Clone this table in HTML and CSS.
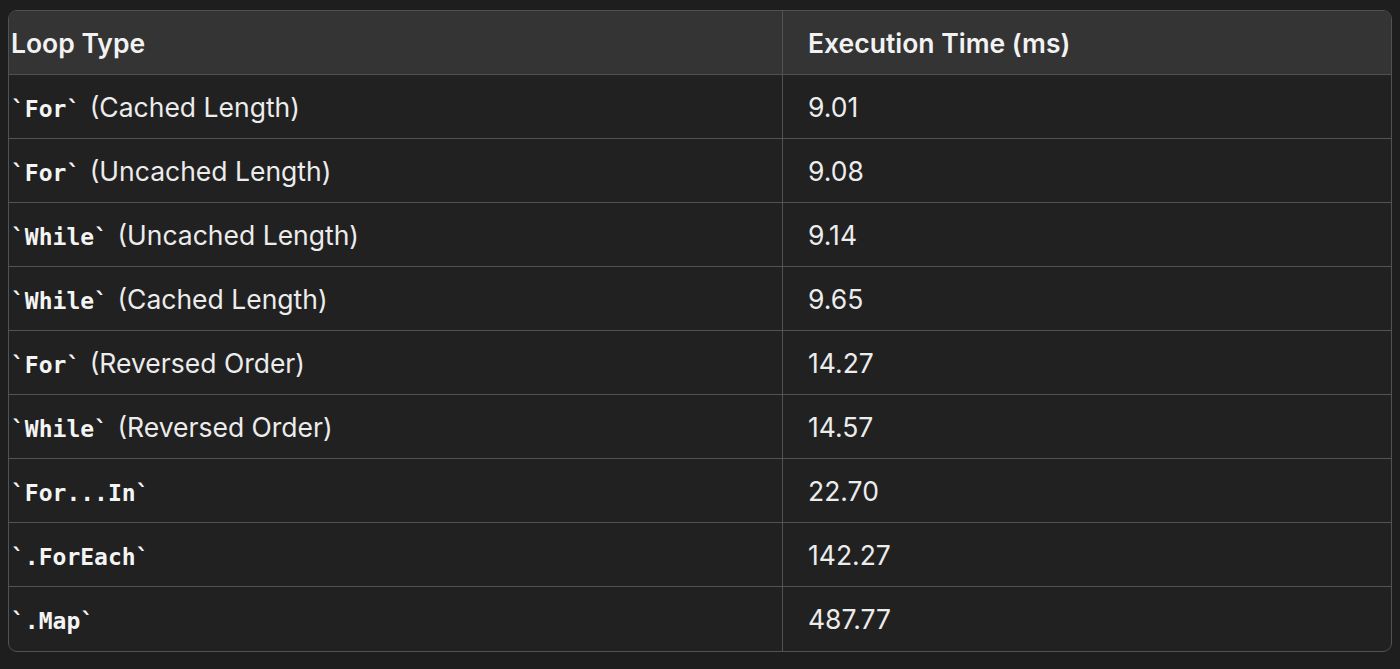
FILE: index.html
```html
<!DOCTYPE html>
<html lang="en">
<head>
<meta charset="utf-8">
<title>Loop benchmark</title>
<link rel="stylesheet" href="styles.css">
</head>
<body>
<div class="wrap">
<table class="bench">
<thead>
<tr><th class="c1">Loop Type</th><th class="c2">Execution Time (ms)</th></tr>
</thead>
<tbody>
<tr><td class="c1"><code>`For`</code> (Cached Length)</td><td class="c2">9.01</td></tr>
<tr><td class="c1"><code>`For`</code> (Uncached Length)</td><td class="c2">9.08</td></tr>
<tr><td class="c1"><code>`While`</code> (Uncached Length)</td><td class="c2">9.14</td></tr>
<tr><td class="c1"><code>`While`</code> (Cached Length)</td><td class="c2">9.65</td></tr>
<tr><td class="c1"><code>`For`</code> (Reversed Order)</td><td class="c2">14.27</td></tr>
<tr><td class="c1"><code>`While`</code> (Reversed Order)</td><td class="c2">14.57</td></tr>
<tr><td class="c1"><code>`For...In`</code></td><td class="c2">22.70</td></tr>
<tr><td class="c1"><code>`.ForEach`</code></td><td class="c2">142.27</td></tr>
<tr><td class="c1"><code>`.Map`</code></td><td class="c2">487.77</td></tr>
</tbody>
</table>
</div>
</body>
</html>
```
FILE: styles.css
```css
html, body {
  margin: 0;
  padding: 0;
  background: #1e1e1e;
}
body {
  font-family: Inter, "Noto Sans", "Liberation Sans", sans-serif;
  color: #ececec;
}
.wrap {
  padding: 10px 8px 0 8px;
}
.bench {
  width: 1384px;
  border-collapse: separate;
  border-spacing: 0;
  border: 1px solid #525252;
  border-radius: 9px;
  overflow: hidden;
  background: #212121;
}
.bench th, .bench td {
  height: 64px;
  padding: 0;
  text-align: left;
  vertical-align: middle;
  font-size: 26.5px;
  border-bottom: 1px solid #525252;
  box-sizing: border-box;
}
.bench tbody tr:last-child td {
  border-bottom: none;
}
.bench th {
  background: #343434;
  font-weight: 600;
  color: #f2f2f2;
}
.bench td {
  font-weight: 400;
}
.bench .c1 {
  width: 774px;
  padding-left: 2px;
  border-right: 1px solid #525252;
}
.bench .c2 {
  padding-left: 25px;
}
.bench code {
  font-family: "DejaVu Sans Mono", "Liberation Mono", monospace;
  font-weight: 700;
  font-size: 23px;
  color: #f4f4f4;
  margin-right: 2px;
}
```
